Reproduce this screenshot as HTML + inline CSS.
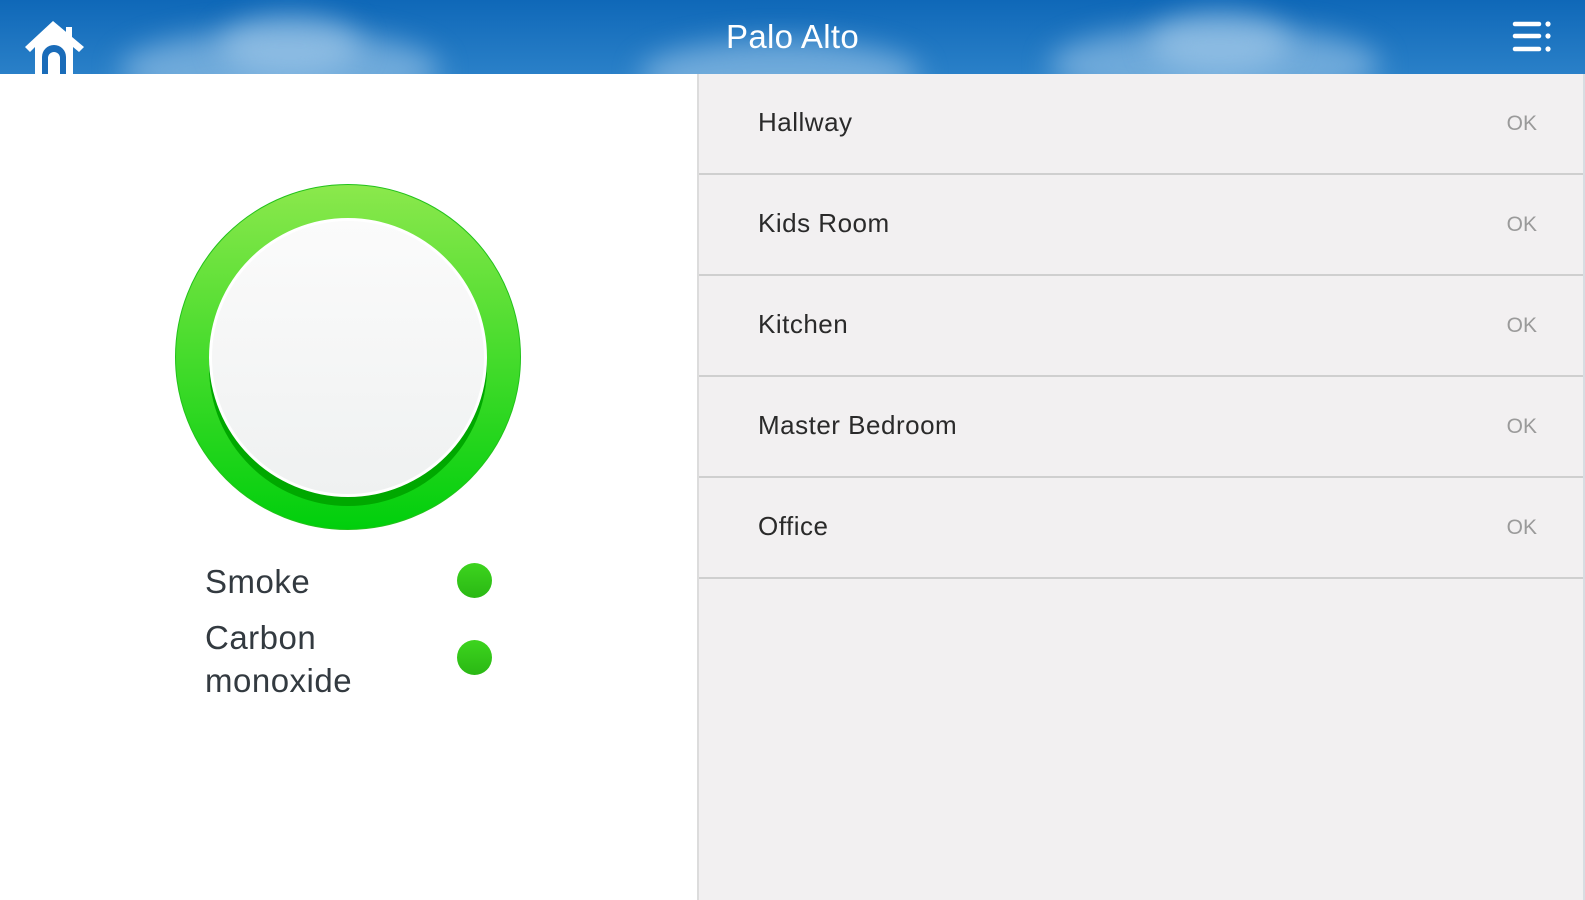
<!DOCTYPE html>
<html><head><meta charset="utf-8"><style>
*{margin:0;padding:0;box-sizing:border-box}
body{width:1585px;height:900px;overflow:hidden;background:#fff;font-family:"Liberation Sans",sans-serif;position:relative}
.hdr{position:absolute;left:0;top:0;width:1585px;height:74px;background:linear-gradient(#0f68b8,#2a80c8);overflow:hidden}
.cloud{position:absolute;border-radius:50%;background:rgba(170,205,235,.55);filter:blur(14px)}
.title{position:absolute;left:0;width:1585px;top:18px;text-align:center;color:#fff;font-size:33px;font-weight:300;letter-spacing:.3px}
.left{position:absolute;left:0;top:74px;width:697px;height:826px;background:#fff}
.right{position:absolute;left:697px;top:74px;width:888px;height:826px;background:#f2f0f1;border-left:2px solid #dcdcdc;border-right:2px solid #d8dde2}
.row{height:101px;border-bottom:2px solid #cfcfcf;position:relative}
.row .n{position:absolute;left:59px;top:33px;font-size:26px;color:#2a2a2a;letter-spacing:.5px}
.row .ok{position:absolute;right:46px;top:38px;font-size:21px;color:#9a9a9a}
.ring{position:absolute;left:175px;top:184px;width:346px;height:346px;border-radius:50%;background:linear-gradient(#8be84c,#00cf0c);border:1px solid #22c21a}
.shadow{position:absolute;left:209px;top:228px;width:278px;height:278px;border-radius:50%;background:#00a800}
.inner{position:absolute;left:209px;top:218px;width:278px;height:279px;border-radius:50%;background:linear-gradient(#fbfbfb,#eff1f1);border:3px solid #fff}
.lbl{position:absolute;left:205px;font-size:33px;color:#333a40;letter-spacing:.5px;line-height:43px}
.dot{position:absolute;left:457px;width:35px;height:35px;border-radius:50%;background:linear-gradient(#3dd41e,#2ab814)}
</style></head><body>
<div class="hdr">
<div class="cloud" style="left:120px;top:30px;width:320px;height:80px"></div>
<div class="cloud" style="left:220px;top:15px;width:140px;height:60px"></div>
<div class="cloud" style="left:640px;top:40px;width:280px;height:70px"></div>
<div class="cloud" style="left:1050px;top:25px;width:330px;height:80px"></div>
<div class="cloud" style="left:1150px;top:12px;width:140px;height:60px"></div>
<svg style="position:absolute;left:0;top:0" width="100" height="74"><path d="M53 21 L84 47 L79 52 L73 47 L73 74 L35 74 L35 47 L30 52 L25 47 Z" fill="#fff"/><rect x="66" y="27" width="6" height="14" fill="#fff"/><path d="M42 74 L42 57 A12 12 0 0 1 66 57 L66 74 L60 74 L60 58 A6 6 0 0 0 48 58 L48 74 Z" fill="#1a6cb9"/></svg>
<div class="title">Palo Alto</div>
<svg style="position:absolute;left:1510px;top:20px" width="45" height="36"><g stroke="#fff" stroke-width="4.5" stroke-linecap="round"><line x1="5" y1="4" x2="29" y2="4"/><line x1="5" y1="16" x2="29" y2="16"/><line x1="5" y1="29" x2="29" y2="29"/></g><g fill="#fff"><circle cx="38" cy="4" r="2.6"/><circle cx="38" cy="16" r="2.6"/><circle cx="38" cy="29" r="2.6"/></g></svg>
</div>
<div class="left"></div>
<div class="ring"></div><div class="shadow"></div><div class="inner"></div>
<div class="lbl" style="top:560px">Smoke</div>
<div class="dot" style="top:563px"></div>
<div class="lbl" style="top:616px">Carbon<br>monoxide</div>
<div class="dot" style="top:640px"></div>
<div class="right">
<div class="row"><span class="n">Hallway</span><span class="ok">OK</span></div>
<div class="row"><span class="n">Kids Room</span><span class="ok">OK</span></div>
<div class="row"><span class="n">Kitchen</span><span class="ok">OK</span></div>
<div class="row"><span class="n">Master Bedroom</span><span class="ok">OK</span></div>
<div class="row"><span class="n">Office</span><span class="ok">OK</span></div>
</div>
</body></html>
